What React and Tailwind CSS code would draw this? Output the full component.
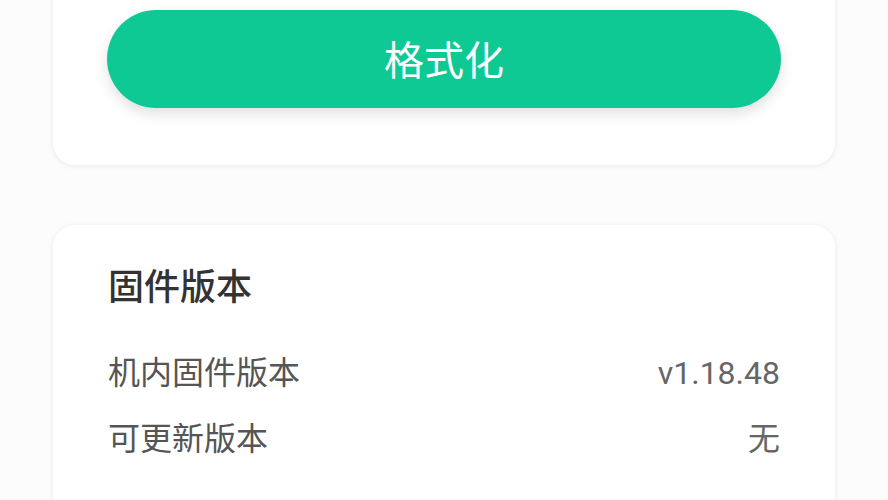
export default function App() {
  const rows = [
    { label: '机内固件版本', value: 'v1.18.48' },
    { label: '可更新版本', value: '无' },
  ];

  return (
    <div
      className="h-[500px] w-[888px] overflow-hidden bg-[#fcfcfc] px-[53px]"
      style={{ fontFamily: 'Roboto, "Noto Sans CJK SC", sans-serif' }}
    >
      <div className="-mt-[50px] rounded-[22px] bg-white px-[54px] pb-[57px] pt-[60px] shadow-[0_1px_6px_rgba(0,0,0,0.08)]">
        <button className="flex h-[98px] w-full items-center justify-center rounded-full bg-[#0ec994] pt-[6px] text-[40px] text-white shadow-[0_6px_14px_rgba(0,0,0,0.12)]">
          格式化
        </button>
      </div>

      <div className="mt-[60px] rounded-[22px] bg-white px-[55px] pt-[38px] pb-[60px] shadow-[0_1px_6px_rgba(0,0,0,0.08)]">
        <h2 className="text-[36px] leading-[50px] font-medium text-[#333]">固件版本</h2>
        <div className="mt-[27px] flex flex-col">
          {rows.map((row) => (
            <div key={row.label} className="flex h-[66px] items-center justify-between text-[32px] text-[#555]">
              <span>{row.label}</span>
              <span className="text-[#666]">{row.value}</span>
            </div>
          ))}
        </div>
      </div>
    </div>
  );
}
